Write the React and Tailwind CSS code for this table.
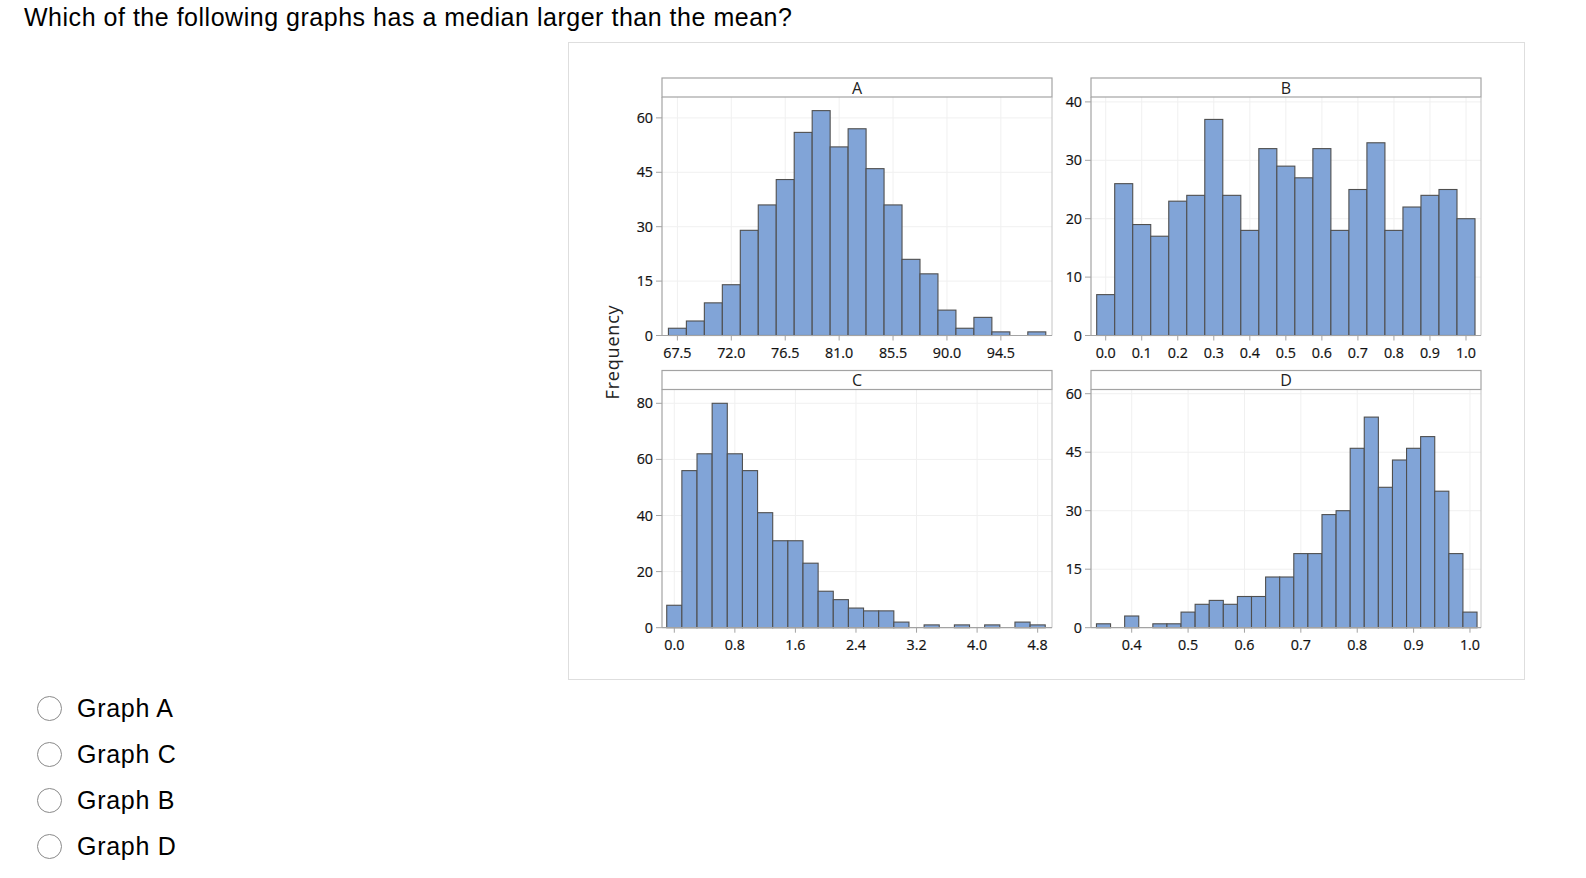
import React from "react";

const BAR_FILL = "#81a4d7";
const BAR_STROKE = "#4f4f4f";
const FRAME = "#a3a3a3";
const GRID = "#f0f0f0";

const panels = [
  {
    label: "A",
    x0: 662,
    x1: 1052,
    yTop: 78,
    yHead: 97,
    yBase: 335.5,
    perUnit: 3.627,
    yTicks: [0, 15, 30, 45, 60],
    xAt: (v) => 677.4 + (v - 67.5) * 11.98,
    xTicks: [67.5, 72.0, 76.5, 81.0, 85.5, 90.0, 94.5],
    binStart: 67.5,
    binWidth: 1.5,
    counts: [2, 4, 9, 14, 29, 36, 43, 56, 62, 52, 57, 46, 36, 21, 17, 7, 2, 5, 1, 0, 1],
  },
  {
    label: "B",
    x0: 1091,
    x1: 1481,
    yTop: 78,
    yHead: 97,
    yBase: 335.5,
    perUnit: 5.84,
    yTicks: [0, 10, 20, 30, 40],
    xAt: (v) => 1105.7 + v * 360.3,
    xTicks: [0, 0.1, 0.2, 0.3, 0.4, 0.5, 0.6, 0.7, 0.8, 0.9, 1.0],
    binStart: 0,
    binWidth: 0.05,
    counts: [7, 26, 19, 17, 23, 24, 37, 24, 18, 32, 29, 27, 32, 18, 25, 33, 18, 22, 24, 25, 20],
  },
  {
    label: "C",
    x0: 662,
    x1: 1052,
    yTop: 370.5,
    yHead: 389.5,
    yBase: 627.7,
    perUnit: 2.805,
    yTicks: [0, 20, 40, 60, 80],
    xAt: (v) => 674.3 + v * 75.7,
    xTicks: [0, 0.8, 1.6, 2.4, 3.2, 4.0, 4.8],
    binStart: 0,
    binWidth: 0.2,
    counts: [8, 56, 62, 80, 62, 56, 41, 31, 31, 23, 13, 10, 7, 6, 6, 2, 0, 1, 0, 1, 0, 1, 0, 2, 1],
  },
  {
    label: "D",
    x0: 1091,
    x1: 1481,
    yTop: 370.5,
    yHead: 389.5,
    yBase: 627.7,
    perUnit: 3.9,
    yTicks: [0, 15, 30, 45, 60],
    xAt: (v) => 1131.7 + (v - 0.4) * 563.8,
    xTicks: [0.4, 0.5, 0.6, 0.7, 0.8, 0.9, 1.0],
    binStart: 0.35,
    binWidth: 0.025,
    counts: [1, 0, 3, 0, 1, 1, 4, 6, 7, 6, 8, 8, 13, 13, 19, 19, 29, 30, 46, 54, 36, 43, 46, 49, 35, 19, 4],
  },
];

function Panel({ p }) {
  const half = p.binWidth / 2;
  const yOf = (v) => p.yBase - v * p.perUnit;
  return (
    <g>
      {/* grid */}
      {p.xTicks.map((t) => (
        <line key={"gx" + t} x1={p.xAt(t)} x2={p.xAt(t)} y1={p.yHead} y2={p.yBase} stroke={GRID} strokeWidth="1" />
      ))}
      {p.yTicks.map((t) => (
        <line key={"gy" + t} x1={p.x0} x2={p.x1} y1={yOf(t)} y2={yOf(t)} stroke={GRID} strokeWidth="1" />
      ))}

      {/* bars */}
      {p.counts.map((c, i) => {
        if (c === 0) return null;
        const center = p.binStart + i * p.binWidth;
        const left = p.xAt(center - half);
        const right = p.xAt(center + half);
        return (
          <rect
            key={i}
            x={left}
            y={yOf(c)}
            width={right - left}
            height={c * p.perUnit}
            fill={BAR_FILL}
            stroke={BAR_STROKE}
            strokeWidth="1.1"
          />
        );
      })}

      {/* header strip */}
      <rect x={p.x0} y={p.yTop} width={p.x1 - p.x0} height={p.yHead - p.yTop} fill="white" stroke={FRAME} strokeWidth="1.2" />
      <text x={(p.x0 + p.x1) / 2} y={(p.yTop + p.yHead) / 2 + 6} textAnchor="middle" fontSize="16" fill="#222">
        {p.label}
      </text>

      {/* plot frame */}
      <line x1={p.x1} x2={p.x1} y1={p.yHead} y2={p.yBase} stroke="#c4c4c4" strokeWidth="1" />
      <line x1={p.x0} x2={p.x0} y1={p.yHead} y2={p.yBase} stroke={FRAME} strokeWidth="1.2" />
      <line x1={p.x0} x2={p.x1} y1={p.yBase} y2={p.yBase} stroke={FRAME} strokeWidth="1.2" />

      {/* y ticks */}
      {p.yTicks.map((t) => (
        <g key={"ty" + t}>
          <line x1={p.x0 - 6} x2={p.x0} y1={yOf(t)} y2={yOf(t)} stroke={FRAME} strokeWidth="1" />
          <text x={p.x0 - 9} y={yOf(t) + 5} textAnchor="end" fontSize="14.3" fill="#111" stroke="#111" strokeWidth="0.2">
            {t}
          </text>
        </g>
      ))}

      {/* x ticks */}
      {p.xTicks.map((t) => (
        <g key={"tx" + t}>
          <line x1={p.xAt(t)} x2={p.xAt(t)} y1={p.yBase} y2={p.yBase + 5} stroke={FRAME} strokeWidth="1" />
          <text x={p.xAt(t)} y={p.yBase + 22} textAnchor="middle" fontSize="14.3" fill="#111" stroke="#111" strokeWidth="0.2">
            {t.toFixed(1)}
          </text>
        </g>
      ))}
    </g>
  );
}

function Histograms() {
  return (
    <svg width="955" height="636" viewBox="569 43 955 636" style={{ fontFamily: '"Open Sans", "Noto Sans", sans-serif' }}>
      <rect x="569" y="43" width="955" height="636" fill="white" />
      {panels.map((p) => (
        <Panel key={p.label} p={p} />
      ))}
      <text
        x="619"
        y="352"
        transform="rotate(-90 619 352)"
        textAnchor="middle"
        fontSize="18"
        letterSpacing="0.8"
        fill="#222"
      >
        Frequency
      </text>
    </svg>
  );
}

const options = ["Graph A", "Graph C", "Graph B", "Graph D"];

const App = () => {
  return (
    <div className="w-[1586px] min-h-[878px] bg-white text-black font-['Liberation_Sans',Arial,sans-serif]">
      <div className="h-[42px] pt-[3px] pl-[24px] text-[25px] leading-[28px] tracking-[0.52px]">
        Which of the following graphs has a median larger than the mean?
      </div>
      <div className="ml-[568px] w-[957px] h-[638px] border border-[#dedede]">
        <Histograms />
      </div>
      <div className="mt-[5px] flex flex-col">
        {options.map((o) => (
          <label key={o} className="h-[46px] flex items-center">
            <span className="ml-[37px] w-[25px] h-[25px] rounded-full border-[1.5px] border-[#8a8a8a] bg-white" />
            <span className="ml-[15px] text-[25px] leading-[28px] tracking-[0.7px]">{o}</span>
          </label>
        ))}
      </div>
    </div>
  );
};

export default App;
